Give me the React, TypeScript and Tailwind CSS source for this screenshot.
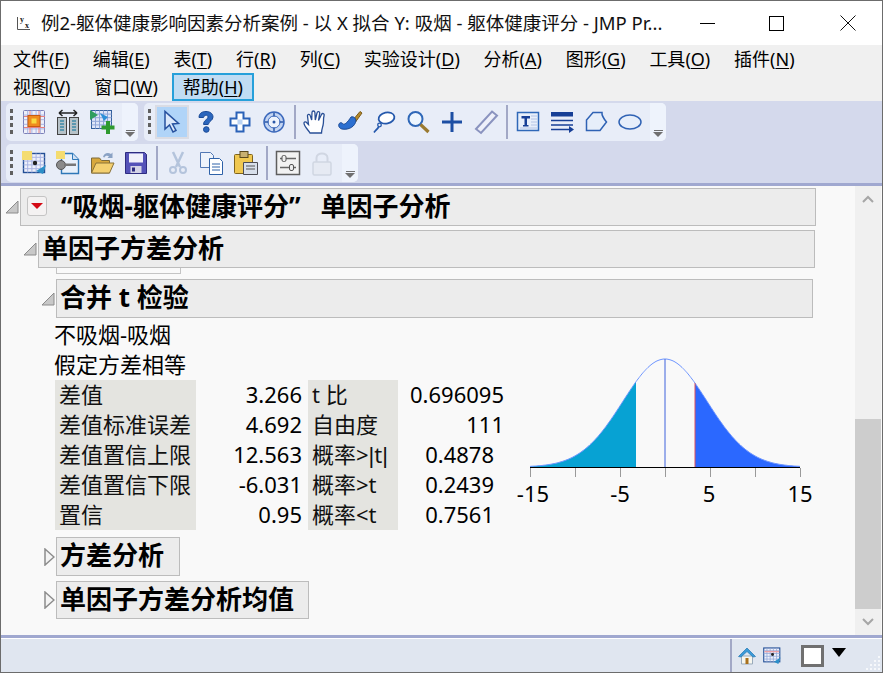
const menuRow1 = [
  ["文件", "F"], ["编辑", "E"], ["表", "T"], ["行", "R"], ["列", "C"],
  ["实验设计", "D"], ["分析", "A"], ["图形", "G"], ["工具", "O"], ["插件", "N"],
];
const menuRow2 = [["视图", "V"], ["窗口", "W"]];

const Bar = () => <span className="font-['Liberation_Sans',sans-serif]">|</span>;

const tableRows = [
  { a: "差值", b: "3.266", c: "t 比", d: "0.696095", pad: "" },
  { a: "差值标准误差", b: "4.692", c: "自由度", d: "111", pad: "" },
  { a: "差值置信上限", b: "12.563", c: <>概率&gt;<Bar />t<Bar /></>, d: "0.4878", pad: "pr-[10px]" },
  { a: "差值置信下限", b: "-6.031", c: "概率>t", d: "0.2439", pad: "pr-[10px]" },
  { a: "置信", b: "0.95", c: "概率<t", d: "0.7561", pad: "pr-[10px]" },
];

// curve geometry: 9px per unit, se 4.692, peak height 108
const cx = 155;
const base = 117;
const sigma = 42.2;
const yAt = (x: number) => base - 108 * Math.exp(-((x - cx) * (x - cx)) / (2 * sigma * sigma));
const curvePts = (from: number, to: number) => {
  const pts: string[] = [];
  for (let x = from; x <= to; x += 1) pts.push(`${x} ${yAt(x).toFixed(1)}`);
  return pts;
};
const areaPath = (from: number, to: number) => `M${from} ${base}L${curvePts(from, to).join("L")}L${to} ${base}Z`;

function Ico({ children }: { children: React.ReactNode }) {
  return <svg width="26" height="26" viewBox="0 0 26 26" fill="none">{children}</svg>;
}

function GridLines({ x = 3, y = 3, w = 20, h = 20, c = "#a9b4e4" }) {
  const v = [1, 2, 3, 4].map((i) => x + (i * w) / 5);
  const hz = [1, 2, 3, 4].map((i) => y + (i * h) / 5);
  return (
    <>
      {v.map((p) => <path key={"v" + p} d={`M${p} ${y}V${y + h}`} stroke={c} />)}
      {hz.map((p) => <path key={"h" + p} d={`M${x} ${p}H${x + w}`} stroke={c} />)}
    </>
  );
}

const icons = {
  data: (
    <Ico>
      <rect x="2.5" y="1.5" width="21" height="23" rx="1" fill="#eef0fa" stroke="#7c80b8" />
      <GridLines x={2.5} y={1.5} w={21} h={23} />
      <path d="M3 7.5H24M3 18.500H24M9 2V24M18 2V24" stroke="#e88080" />
      <rect x="7" y="6.500" width="12" height="11" fill="#ef8a1e" stroke="#c85a10" />
      <rect x="10.500" y="9.500" width="5" height="5" fill="#f8d840" />
    </Ico>
  ),
  columns: (
    <Ico>
      <path d="M5 4H21M4 4l3.500-3M4 4l3.500 3M22 4l-3.500-3M22 4l-3.500 3" stroke="#222" strokeWidth="1.500" />
      <rect x="2.500" y="8.500" width="9" height="17" fill="#b7c2c8" stroke="#444" />
      <rect x="14.500" y="8.500" width="9" height="17" fill="#b7c2c8" stroke="#444" />
      <path d="M5 12h4M5 15h4M5 18h4M5 21h4M17 12h4M17 15h4M17 18h4M17 21h4" stroke="#3f8aa8" strokeWidth="1.500" />
    </Ico>
  ),
  addGrid: (
    <Ico>
      <rect x="2.500" y="1.500" width="20" height="18" fill="#dfe6f8" stroke="#335f9c" />
      <GridLines x={2.500} y={1.500} w={20} h={18} c="#8fa6d8" />
      <path d="M1 1l8 5-8 5z" fill="#2f9e5f" />
      <path d="M11 4l8 4-4 4z" fill="#2b8fd8" />
      <path d="M19 12v13M12.500 18.500h13" stroke="#2f9a2f" strokeWidth="4" />
    </Ico>
  ),
  cursor: (
    <Ico>
      <path d="M6 2.500V20l4.500-4 3.500 7 3-1.500-3.500-6.500 6-.5z" fill="#dbe8fa" stroke="#26509e" strokeWidth="1.500" />
    </Ico>
  ),
  help: (
    <Ico>
      <path d="M6 8.500C6 4 9.500 2.500 13 2.500s7 1.800 7 5.500c0 3.500-4 4-4.800 7.500h-4.600C10.500 11 15 10.500 15 8c0-2.500-4-2.500-4.500.5z" fill="#2b66bd" stroke="#1b4a96" />
      <circle cx="13.300" cy="20.500" r="2.800" fill="#2b66bd" stroke="#1b4a96" />
    </Ico>
  ),
  plusBox: (
    <Ico>
      <path d="M9.500 3.500h7v6h6v7h-6v6h-7v-6h-6v-7h6z" fill="#fff" stroke="#2b62b8" strokeWidth="2" />
      <rect x="10.500" y="10.500" width="5" height="5" fill="#bcd4f4" />
    </Ico>
  ),
  target: (
    <Ico>
      <circle cx="13" cy="13" r="10" fill="#c4d5f2" stroke="#3b68bc" strokeWidth="1.500" />
      <circle cx="13" cy="13" r="6" fill="#eef3fc" stroke="#3b68bc" />
      <circle cx="13" cy="13" r="1.500" fill="#2b58a8" />
      <path d="M13 3.500v4M13 18.500v4M3.500 13h4M18.500 13h4" stroke="#2b58a8" strokeWidth="1.500" />
    </Ico>
  ),
  hand: (
    <Ico>
      <path d="M7 24c-1.500-3-5.500-6-6-9.500-.3-2 2-2 3-.5L5.500 15.500 4.500 7C4.300 5 6.800 4.800 7.300 6.700L8.700 11 9 3.500C9.100 1.500 11.700 1.500 11.900 3.500l.4 7.500 1.700-7c.4-2 3-1.600 2.700.4L15.500 11.500l3-6c.9-1.800 3.200-.9 2.600 1C20 10 21 13 20 16.500c-.7 2.500-1.500 4.500-1.500 7.500z" fill="#fff" stroke="#294f96" strokeWidth="1.300" />
    </Ico>
  ),
  brush: (
    <Ico>
      <path d="M16 11l7-8.500 2 1.500-6.500 9z" fill="#b58a2c" stroke="#7a5a18" />
      <path d="M14 8c3-1 6 2 4.500 5.500C16.500 19 10 21 5 20c-2.500-.5-4-3-3-5 1-2 3-1.500 4 0 1.500 1 4.500-1.500 8-7z" fill="#2c6fd0" stroke="#1c4a94" />
    </Ico>
  ),
  lasso: (
    <Ico>
      <ellipse cx="15.500" cy="9" rx="8" ry="5.500" transform="rotate(-12 15.500 9)" fill="#fff" stroke="#2458ac" strokeWidth="1.800" />
      <circle cx="8.500" cy="16" r="1.800" stroke="#2458ac" strokeWidth="1.300" />
      <path d="M7.500 18c-.5 1.500-2.500 3-4.500 5.500" stroke="#2458ac" strokeWidth="1.800" />
    </Ico>
  ),
  zoom: (
    <Ico>
      <circle cx="10.500" cy="10" r="7" fill="#eef6fe" stroke="#2f68b8" strokeWidth="2" />
      <path d="M15.500 15.500l8 7.500" stroke="#9a7a30" strokeWidth="3.200" />
    </Ico>
  ),
  plus: (
    <Ico>
      <path d="M13 3v20M3 13h20" stroke="#1d4fa4" strokeWidth="3" />
    </Ico>
  ),
  ruler: (
    <Ico>
      <path d="M19 2.500l5 4L8 24l-5-4z" fill="#eef0fa" stroke="#8a93bf" strokeWidth="2" />
    </Ico>
  ),
  textBox: (
    <Ico>
      <rect x="2.500" y="3.500" width="21" height="18" fill="#e8effa" stroke="#2f68b8" strokeWidth="1.500" />
      <path d="M16 7h6M16 10h6M16 13h6M16 16h6M5 19h17" stroke="#b4c4e6" />
      <path d="M6.500 7h8.500v2.500h-3V16h1.500v1.500h-5.500V16h1.500V9.500h-3z" fill="#173f96" />
    </Ico>
  ),
  lines: (
    <Ico>
      <rect x="2" y="3" width="22" height="4.500" fill="#173f96" />
      <path d="M2 11.500h22M2 16h22M2 20.500h19" stroke="#173f96" strokeWidth="1.500" />
      <path d="M20 17v7l5-3.500z" fill="#173f96" />
    </Ico>
  ),
  polygon: (
    <Ico>
      <path d="M3.500 21.500V11L10 3.500h9c-.5 3 2 6.500 4.500 9.500l-6.500 8.500z" fill="#e6eefa" stroke="#2f62b4" strokeWidth="1.500" />
    </Ico>
  ),
  ellipse: (
    <Ico>
      <ellipse cx="13" cy="13" rx="11" ry="7" fill="#e6eefa" stroke="#2f62b4" strokeWidth="1.500" />
    </Ico>
  ),
  newData: (
    <Ico>
      <rect x="2.500" y="3.500" width="21" height="19" fill="#eef0fa" stroke="#234f96" strokeWidth="1.400" />
      <GridLines x={2.500} y={3.500} w={21} h={19} />
      <path d="M1 1h10v9H1z" fill="#f4dc70" />
      <circle cx="14" cy="13" r="2.200" fill="#222" />
      <path d="M15 21l10-6-3 9z" fill="#2c8fc8" />
    </Ico>
  ),
  newScript: (
    <Ico>
      <path d="M6.500 3.500h11l6 6v14h-17z" fill="#e8f0fa" stroke="#2f78b8" strokeWidth="1.400" />
      <path d="M17.500 3.500v6h6" fill="#cfe0f4" stroke="#2f78b8" />
      <path d="M1 1h9v8H1z" fill="#f4dc70" />
      <circle cx="6" cy="15" r="4.500" fill="#8a8a8a" stroke="#555" />
      <path d="M9 13.500h12v2.500H9z" fill="#777" />
    </Ico>
  ),
  folder: (
    <Ico>
      <path d="M2.500 23V8h8l2 2.500h8V23z" fill="#d8a83c" stroke="#7d6a3a" />
      <path d="M2.500 23l4.500-10h18l-4.500 10z" fill="#f4d070" stroke="#8a7238" />
      <path d="M14 7c1-4 5-5 8-3l1.500-1.500V8h-5l1.500-1.800c-2-1-4-.5-4.500 1.300" fill="#8aa2c4" />
    </Ico>
  ),
  save: (
    <Ico>
      <path d="M2.500 2.500h19l2 2v19h-21z" fill="#5452b8" stroke="#2e2c80" />
      <rect x="6" y="3.500" width="14" height="9" fill="#f0f0fa" />
      <rect x="7.500" y="16" width="11" height="7" fill="#d4d4e6" />
      <rect x="9" y="17.500" width="3" height="4" fill="#2e2c80" />
    </Ico>
  ),
  cut: (
    <Ico>
      <path d="M8 2l7 15M18 2l-7 15" stroke="#b4c4dc" strokeWidth="2.500" />
      <circle cx="8" cy="20" r="3" stroke="#b4c4dc" strokeWidth="2" />
      <circle cx="18" cy="20" r="3" stroke="#b4c4dc" strokeWidth="2" />
    </Ico>
  ),
  copy: (
    <Ico>
      <path d="M1.500 2.500h10l3 3v12h-13z" fill="#eef3fb" stroke="#5278b4" />
      <path d="M10.500 8.500h10l3 3v13h-13z" fill="#fff" stroke="#2f62a8" />
      <path d="M13 14h8M13 17h8M13 20h8" stroke="#2f62a8" />
    </Ico>
  ),
  paste: (
    <Ico>
      <rect x="1.500" y="4.500" width="18" height="19" rx="1" fill="#f0c850" stroke="#80641c" />
      <rect x="7" y="1.500" width="8" height="6" fill="#c8b070" stroke="#5c4a1c" />
      <path d="M10.500 12.500h14v12h-14z" fill="#d8dfea" stroke="#4c4c54" />
      <path d="M13 16h9M13 19h9" stroke="#555" />
    </Ico>
  ),
  sliders: (
    <Ico>
      <rect x="1.500" y="1.500" width="23" height="23" fill="#f2f2f2" stroke="#5e5e5e" strokeWidth="1.500" />
      <path d="M5 8.500h16M5 17.500h16" stroke="#666" strokeWidth="1.500" />
      <rect x="7" y="5.500" width="4" height="6" rx="1.500" fill="#eee" stroke="#555" />
      <rect x="14.500" y="14.500" width="4" height="6" rx="1.500" fill="#eee" stroke="#555" />
    </Ico>
  ),
  lock: (
    <Ico>
      <path d="M7.500 12V8c0-6 11-6 11 0v4" stroke="#d0d6e2" strokeWidth="2" />
      <rect x="4" y="12" width="18" height="13" rx="1.500" fill="#e6eaf3" stroke="#d0d6e2" strokeWidth="1.500" />
    </Ico>
  ),
};

type IconName = keyof typeof icons;

function Grip() {
  return (
    <div className="flex h-full w-[10px] shrink-0 flex-col justify-center gap-[3px] pl-[4px] pb-[1px]">
      <span className="h-[4px] w-[3px] bg-[#606060]" />
      <span className="h-[4px] w-[3px] bg-[#606060]" />
      <span className="h-[4px] w-[3px] bg-[#606060]" />
      <span className="h-[4px] w-[3px] bg-[#606060]" />
    </div>
  );
}

function Overflow() {
  return (
    <div className="ml-[3px] flex h-full w-[16px] flex-col items-center justify-end rounded-r-[5px] bg-[#eef3fc] pb-[4px]">
      <span className="mb-[1px] h-[1px] w-[9px] bg-[#707070]" />
      <span className="h-0 w-0 border-x-[5px] border-t-[5px] border-x-transparent border-t-[#707070]" />
    </div>
  );
}

function Tool({ name, active }: { name: IconName; active?: boolean }) {
  return (
    <div className={`flex h-[34px] w-[34px] items-center justify-center ${active ? "border-2 border-[#dadce4] bg-[#b0d4f8]" : ""}`}>
      {icons[name]}
    </div>
  );
}

function Sep() {
  return (
    <div className="flex h-[34px] w-[8px] justify-center">
      <span className="h-full w-[2px] bg-[#a2a8c6]" />
    </div>
  );
}

function Group({ items, className }: { items: (IconName | "|")[]; className?: string }) {
  return (
    <div className={`flex h-[38px] items-center rounded-[5px] bg-[#e8edf8] ${className ?? ""}`}>
      <Grip />
      <div className="ml-px flex items-center">
        {items.map((it, i) => it === "|" ? <Sep key={i} /> : <Tool key={i} name={it} active={it === "cursor"} />)}
      </div>
      <Overflow />
    </div>
  );
}

function MenuItem({ label, hot, active }: { label: string; hot: string; active?: boolean }) {
  return (
    <div className={`flex h-[28px] items-center ${active ? "ml-[2px] border-2 border-[#26a0da] bg-[#c0dcf3] px-[9px]" : "px-[11.9px]"}`}>
      {label}(<span className="underline underline-offset-2">{hot}</span>)
    </div>
  );
}

function Expanded({ className }: { className?: string }) {
  return (
    <svg width="14" height="14" viewBox="0 0 14 14" className={className}>
      <path d="M1 13L13 1V13Z" fill="#c8c8c8" stroke="#8c8c8c" />
    </svg>
  );
}

function Collapsed() {
  return (
    <svg width="11" height="18" viewBox="0 0 11 18">
      <path d="M1 1L10 9L1 17Z" fill="#f4f4f4" stroke="#8c8c8c" strokeWidth="1.500" />
    </svg>
  );
}

function Header({ children, className }: { children: React.ReactNode; className?: string }) {
  return (
    <div className={`flex h-[38px] items-center whitespace-nowrap border border-[#bcbcbc] bg-[#ececec] pb-[2px] text-[26px] font-bold text-black ${className ?? ""}`}>
      {children}
    </div>
  );
}

function TitleIcon() {
  return (
    <svg width="15" height="15" viewBox="0 0 15 15" className="shrink-0">
      <path d="M1.500 1V13.500H14" stroke="#555" fill="none" />
      <text x="4" y="6" fontSize="8" fontWeight="700" fontFamily="'Liberation Serif', serif" fill="#111">y</text>
      <text x="9" y="12" fontSize="8" fontWeight="700" fontFamily="'Liberation Serif', serif" fill="#111">x</text>
    </svg>
  );
}

function Chart() {
  const ticks = [20, 65, 110, 155, 200, 245, 290];
  return (
    <svg width="320" height="160" viewBox="0 0 320 160" className="mt-[32px] ml-[5px] shrink-0">
      <path d={areaPath(20, 126)} fill="#07a2d3" />
      <path d={areaPath(185, 290)} fill="#2b68ff" />
      <polyline points={curvePts(20, 290).join(" ")} fill="none" stroke="#6f96ff" strokeWidth="1" />
      <path d={`M155 ${yAt(155)}V117`} stroke="#3f63dc" />
      <path d={`M185 ${yAt(185)}V117`} stroke="#e0505a" />
      <path d="M20 117.500H290" stroke="#000" />
      {ticks.map((t) => <path key={t} d={`M${t + 0.5} 118V127`} stroke="#9a9a9a" />)}
      <g fontSize="22" fill="#000" textAnchor="middle">
        <text x="23" y="152">-15</text>
        <text x="110" y="152">-5</text>
        <text x="199" y="152">5</text>
        <text x="290" y="152">15</text>
      </g>
    </svg>
  );
}

function Home() {
  return (
    <svg width="18" height="18" viewBox="0 0 18 18">
      <path d="M3.500 9h11v8h-11z" fill="#f6f6ee" stroke="#9ab" />
      <path d="M0.500 9.500L9 1l8.500 8.500L15 10 9 4.500 3 10z" fill="#3a9ad8" stroke="#2e7fb8" strokeWidth="0.800" />
      <rect x="7.500" y="11" width="3" height="6" fill="#a8701c" />
    </svg>
  );
}

export default function App() {
  return (
    <div className="flex h-[673px] w-[883px] flex-col overflow-hidden border border-[#6c6c6c] bg-white font-['Noto_Sans','Noto_Sans_CJK_SC',sans-serif] text-black">
      {/* title bar */}
      <div className="flex h-[44px] shrink-0 items-center pl-[15px]">
        <TitleIcon />
        <div className="ml-[10px] w-[626px] truncate text-[18.5px] text-[#111]">例2-躯体健康影响因素分析案例 - 以 X 拟合 Y: 吸烟 - 躯体健康评分 - JMP Pr...</div>
        <div className="ml-[33px] h-[1px] w-[15px] bg-black" />
        <div className="ml-[54px] h-[15px] w-[15px] border border-black" />
        <svg width="16" height="16" viewBox="0 0 16 16" className="ml-[56px]">
          <path d="M0.500 0.500L15.500 15.500M15.500 0.500L0.500 15.500" stroke="#111" />
        </svg>
      </div>

      {/* menu */}
      <div className="shrink-0 bg-[#f0f0f0] text-[18px] leading-none">
        <div className="flex">
          {menuRow1.map(([l, h]) => <MenuItem key={h} label={l} hot={h} />)}
        </div>
        <div className="flex">
          {menuRow2.map(([l, h]) => <MenuItem key={h} label={l} hot={h} />)}
          <MenuItem label="帮助" hot="H" active />
        </div>
      </div>

      {/* toolbars */}
      <div className="flex h-[82px] shrink-0 flex-col gap-[3px] bg-[#d4d9ec] pt-[2px] pl-[5px]">
        <div className="flex gap-[6px]">
          <Group items={["data", "columns", "addGrid"]} />
          <Group items={["cursor", "help", "plusBox", "target", "|", "hand", "brush", "lasso", "zoom", "plus", "ruler", "|", "textBox", "lines", "polygon", "ellipse"]} />
        </div>
        <Group className="w-fit" items={["newData", "newScript", "folder", "save", "|", "cut", "copy", "paste", "|", "sliders", "lock"]} />
      </div>
      <div className="h-[3px] shrink-0 bg-[#a0a8d0]" />

      {/* report */}
      <div className="flex min-h-0 flex-1 bg-[#f9f9f9]">
        <div className="w-[854px] shrink-0 overflow-hidden pt-[2px]">
          <div className="flex items-center pl-[4px]">
            <Expanded className="mr-[1px]" />
            <Header className="w-[796px]">
              <div className="ml-[6px] flex h-[20px] w-[20px] items-center justify-center rounded-[3px] border border-[#c4c4c4] bg-[#f4f2f2]">
                <span className="h-0 w-0 border-x-[6px] border-t-[6px] border-x-transparent border-t-[#d40a14]" />
              </div>
              <span className="ml-[14px]">“吸烟-躯体健康评分<span className="mr-[20px]">”</span>单因子分析</span>
            </Header>
          </div>
          <div className="mt-[4px] flex items-center pl-[22px]">
            <Expanded className="mr-[1px]" />
            <Header className="w-[777px] pl-[3px]">单因子方差分析</Header>
          </div>
          <div className="ml-[55px] h-[6px] w-[125px] border-x border-b border-[#c4c4c4]" />
          <div className="mt-[5px] flex items-center pl-[40px]">
            <Expanded className="mr-px" />
            <Header className="h-[39px] w-[757px] pl-[3px]">合并 t 检验</Header>
          </div>

          <div className="flex items-start pl-[54px]">
            <div className="w-[450px] shrink-0 whitespace-nowrap text-[22px] leading-[30px]">
              <div className="-ml-px mt-[2px] h-[30px] -translate-y-px">不吸烟-吸烟</div>
              <div className="-ml-px h-[30px] -translate-y-px">假定方差相等</div>
              <div className="grid grid-cols-[141px_112px_90px_106px]">
                {tableRows.map((r) => (
                  <div key={r.a} className="contents">
                    <div className="h-[30px] bg-[#e4e4e0] pl-[4px] text-[#111]"><div className="-translate-y-px">{r.a}</div></div>
                    <div className="h-[30px] pr-[6px] text-right"><div className="-translate-y-px">{r.b}</div></div>
                    <div className="h-[30px] bg-[#e4e4e0] pl-[4px] text-[#111]"><div className="-translate-y-px">{r.c}</div></div>
                    <div className={`h-[30px] text-right ${r.pad}`}><div className="-translate-y-px">{r.d}</div></div>
                  </div>
                ))}
              </div>
            </div>
            <Chart />
          </div>

          <div className="mt-[7px] flex items-center pl-[43px]">
            <Collapsed />
            <Header className="ml-[1px] h-[39px] w-[124px] pl-[3px]">方差分析</Header>
          </div>
          <div className="mt-[5px] flex items-center pl-[43px]">
            <Collapsed />
            <Header className="ml-[1px] w-[253px] pl-[3px]">单因子方差分析均值</Header>
          </div>
        </div>

        {/* scrollbar */}
        <div className="flex w-[26px] shrink-0 flex-col bg-[#f0f0f0]">
          <div className="flex h-[26px] items-center justify-center">
            <svg width="12" height="8" viewBox="0 0 12 8"><path d="M1 7l5-5 5 5" fill="none" stroke="#a6a6a6" strokeWidth="2" /></svg>
          </div>
          <div className="h-[207px]" />
          <div className="h-[190px] bg-[#cdcdcd]" />
          <div className="flex h-[26px] items-center justify-center">
            <svg width="12" height="8" viewBox="0 0 12 8"><path d="M1 1l5 5 5-5" fill="none" stroke="#a6a6a6" strokeWidth="2" /></svg>
          </div>
        </div>
      </div>

      {/* status bar */}
      <div className="h-[3px] shrink-0 bg-[#a0a8d0]" />
      <div className="flex h-[34px] shrink-0 items-center border-t border-white bg-[#e0e6f0] pl-[729px]">
        <div className="h-full w-[2px] bg-[#a2a8c6]" />
        <div className="ml-[6px]"><Home /></div>
        <svg width="19" height="18" viewBox="0 0 26 24" className="ml-[7px]">
          <rect x="1" y="1" width="22" height="19" fill="#eef0fa" stroke="#234f96" strokeWidth="1.500" />
          <GridLines x={1} y={1} w={22} h={19} c="#8fa6d8" />
          <path d="M2 6h20" stroke="#e8a0a8" strokeWidth="2" />
          <circle cx="13" cy="10" r="2" fill="#222" />
          <path d="M15 20l9-6-3 9z" fill="#2c8fc8" />
        </svg>
        <div className="ml-[19px] h-[22px] w-[23px] border-[3px] border-[#707070] bg-white" />
        <span className="ml-[8px] mb-[7px] h-0 w-0 border-x-[7px] border-t-[9px] border-x-transparent border-t-black" />
        <svg width="18" height="18" viewBox="0 0 18 18" className="mt-auto ml-auto">
          <path d="M14 2h2v2h-2zM10 6h2v2h-2zM14 6h2v2h-2zM6 10h2v2H6zM10 10h2v2h-2zM14 10h2v2h-2zM2 14h2v2H2zM6 14h2v2H6zM10 14h2v2h-2zM14 14h2v2h-2z" fill="#f6f8fb" />
        </svg>
      </div>
    </div>
  );
}
